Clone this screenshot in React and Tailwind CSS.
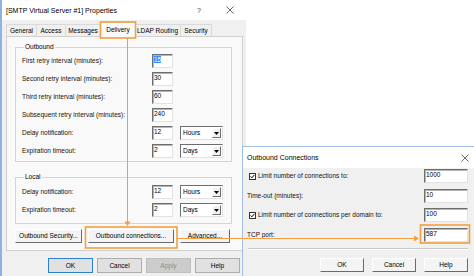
import React from 'react';

const label = 'text-[6.5px] leading-[8px] text-[#111] whitespace-nowrap';

function CloseIcon() {
  return (
    <svg width="8" height="8" viewBox="0 0 8 8" className="shrink-0">
      <path d="M0.5 0.5L7.5 7.5M7.5 0.5L0.5 7.5" stroke="#444" strokeWidth="0.8" />
    </svg>
  );
}

function TextBox({ value, selected, wide }) {
  return (
    <div
      className={
        (wide ? 'w-[44px] ' : 'w-[21px] ') +
        'h-[14px] shrink-0 border border-t-[#6e6e6e] border-l-[#6e6e6e] border-r-[#e2e2e2] border-b-[#e2e2e2] bg-white pl-[1px] pt-[1px] text-[6.5px] leading-[8px] text-black shadow-[inset_1px_1px_0_#b4b4b4]'
      }
    >
      {selected ? <span className="bg-[#3390ff] text-white">{value}</span> : value}
    </div>
  );
}

function Combo({ value }) {
  return (
    <div className="ml-[7px] flex h-[14px] w-[43px] shrink-0 items-center border border-t-[#6e6e6e] border-l-[#6e6e6e] border-r-[#e2e2e2] border-b-[#e2e2e2] bg-white pl-[2px]">
      <span className="flex-1 text-[6.5px] leading-[8px] text-black">{value}</span>
      <div className="mr-[1px] flex h-[10px] w-[9px] items-center justify-center border border-t-white border-l-white border-r-[#6e6e6e] border-b-[#6e6e6e] bg-[#f0f0f0]">
        <svg width="5" height="3" viewBox="0 0 5 3">
          <path d="M0 0H5L2.5 3Z" fill="#000" />
        </svg>
      </div>
    </div>
  );
}

function Row({ text, value, selected, combo }) {
  return (
    <div className="flex h-[14px] items-center">
      <span className={'w-[130px] shrink-0 ' + label}>{text}</span>
      <TextBox value={value} selected={selected} />
      {combo && <Combo value={combo} />}
    </div>
  );
}

function Btn3D({ children, width }) {
  return (
    <div
      className={
        width +
        ' flex h-[14px] shrink-0 items-center justify-center border border-t-white border-l-white border-r-[#696969] border-b-[#696969] bg-[#f4f4f4] text-[6.5px] leading-[8px] text-black'
      }
    >
      {children}
    </div>
  );
}

function Tab({ text, width, active }) {
  if (active) {
    return (
      <div
        className={
          width +
          ' z-10 -mb-[1px] flex h-[15px] items-center justify-center border border-b-0 border-[#d0d0d0] bg-[#f9f9f9] text-[6.5px] leading-[8px] text-black'
        }
      >
        {text}
      </div>
    );
  }
  return (
    <div
      className={
        width +
        ' -ml-[1px] flex h-[12px] items-center justify-center border border-b-0 border-[#d9d9d9] bg-[#f0f0f0] text-[6.5px] leading-[8px] text-black first:ml-0'
      }
    >
      {text}
    </div>
  );
}

function CheckBox() {
  return (
    <div className="ml-[2px] flex h-[7px] w-[7px] shrink-0 items-center justify-center border border-[#333] bg-white">
      <svg width="5" height="5" viewBox="0 0 5 5">
        <path d="M0.6 2.4L1.9 3.8L4.4 0.9" stroke="#000" strokeWidth="1" fill="none" />
      </svg>
    </div>
  );
}

function PropertiesDialog() {
  return (
    <div className="absolute left-0 top-0 flex h-[276px] w-[246px] flex-col border-l-2 border-[#8db4de] bg-[#f0f0f0]">
      <div className="flex h-[20px] shrink-0 items-center bg-white pl-[4px]">
        <span className="text-[7px] leading-[9px] text-black">[SMTP Virtual Server #1] Properties</span>
        <span className="ml-auto text-[7px] leading-[9px] text-[#333]">?</span>
        <span className="ml-[25px] mr-[12px]">
          <CloseIcon />
        </span>
      </div>

      <div className="flex flex-col pl-[4px] pr-[3px] pt-[2px]">
        <div className="flex h-[14px] items-end">
          <Tab text="General" width="w-[31px]" />
          <Tab text="Access" width="w-[30px]" />
          <Tab text="Messages" width="w-[36px]" />
          <Tab text="Delivery" width="w-[36px] -mx-[1px]" active />
          <Tab text="LDAP Routing" width="w-[47px]" />
          <Tab text="Security" width="w-[32px]" />
        </div>

        <div className="flex h-[215px] flex-col border border-[#d0d0d0] bg-[#f9f9f9] pl-[8px] pr-[10px] pt-[6px]">
          <fieldset className="border border-[#d5d5d5] px-[6px] pb-[3px] pt-[3px]">
            <legend className="ml-[2px] px-[1px] text-[6.5px] leading-[8px] text-black">Outbound</legend>
            <div className="flex flex-col gap-[4px]">
              <Row text="First retry interval (minutes):" value="15" selected />
              <Row text="Second retry interval (minutes):" value="30" />
              <Row text="Third retry interval (minutes):" value="60" />
              <Row text="Subsequent retry interval (minutes):" value="240" />
              <Row text="Delay notification:" value="12" combo="Hours" />
              <Row text="Expiration timeout:" value="2" combo="Days" />
            </div>
          </fieldset>

          <fieldset className="mt-[11px] border border-[#d5d5d5] px-[6px] pb-[6px] pt-[4px]">
            <legend className="ml-[2px] px-[1px] text-[6.5px] leading-[8px] text-black">Local</legend>
            <div className="flex flex-col gap-[4px]">
              <Row text="Delay notification:" value="12" combo="Hours" />
              <Row text="Expiration timeout:" value="2" combo="Days" />
            </div>
          </fieldset>

          <div className="mt-[5px] flex gap-[6px]">
            <Btn3D width="w-[67px]">Outbound Security...</Btn3D>
            <Btn3D width="w-[86px]">Outbound connections...</Btn3D>
            <Btn3D width="w-[50px]">Advanced...</Btn3D>
          </div>
        </div>

        <div className="mt-[7px] flex justify-end gap-[4px] pr-[3px]">
          <div className="flex h-[15px] w-[45px] items-center justify-center border border-[#2f7fd1] bg-[#e1e1e1] text-[6.5px] leading-[8px] text-black">
            OK
          </div>
          <div className="flex h-[15px] w-[45px] items-center justify-center border border-[#adadad] bg-[#e1e1e1] text-[6.5px] leading-[8px] text-black">
            Cancel
          </div>
          <div className="flex h-[15px] w-[45px] items-center justify-center border border-[#bfbfbf] bg-[#cccccc] text-[6.5px] leading-[8px] text-[#8c8c8c]">
            Apply
          </div>
          <div className="flex h-[15px] w-[45px] items-center justify-center border border-[#adadad] bg-[#e1e1e1] text-[6.5px] leading-[8px] text-black">
            Help
          </div>
        </div>
      </div>
    </div>
  );
}

function ConnectionsDialog() {
  return (
    <div className="absolute bottom-0 left-[242px] right-0 top-[146px] flex flex-col border-l border-t border-[#9fc0e3] bg-[#f0f0f0]">
      <div className="flex h-[21px] shrink-0 items-center bg-white pl-[4px] pr-[5px]">
        <span className="text-[7px] leading-[9px] text-black">Outbound Connections</span>
        <span className="ml-auto">
          <CloseIcon />
        </span>
      </div>

      <div className="flex flex-col pl-[4px] pr-[6px] pt-[1px]">
        <div className="flex flex-col gap-[5.5px]">
          <div className="flex h-[14px] items-center">
            <CheckBox />
            <span className={'ml-[2px] flex-1 ' + label}>Limit number of connections to:</span>
            <TextBox value="1000" wide />
          </div>
          <div className="flex h-[14px] items-center">
            <span className={'flex-1 ' + label}>Time-out (minutes):</span>
            <TextBox value="10" wide />
          </div>
          <div className="flex h-[14px] items-center">
            <CheckBox />
            <span className={'ml-[2px] flex-1 ' + label}>Limit number of connections per domain to:</span>
            <TextBox value="100" wide />
          </div>
          <div className="flex h-[14px] items-center">
            <span className={'flex-1 ' + label}>TCP port:</span>
            <TextBox value="587" wide />
          </div>
        </div>

        <div className="ml-[1px] mt-[6px] border-t border-b border-t-[#c8c8c8] border-b-white" />

        <div className="mt-[8px] flex justify-end gap-[8px]">
          <Btn3D width="w-[44px]">OK</Btn3D>
          <Btn3D width="w-[44px]">Cancel</Btn3D>
          <Btn3D width="w-[44px]">Help</Btn3D>
        </div>
      </div>
    </div>
  );
}

function Callouts() {
  const c = '#f0a040';
  return (
    <svg className="pointer-events-none absolute inset-0 z-20" width="474" height="276" viewBox="0 0 474 276">
      <rect x="100.5" y="22" width="35" height="16" fill="none" stroke={c} strokeWidth="1.6" />
      <line x1="127.5" y1="38" x2="127.5" y2="223" stroke={c} strokeWidth="1" />
      <path d="M124.5 221.5H130.5L127.5 226Z" fill={c} />
      <rect x="85.5" y="227" width="91.5" height="21" fill="none" stroke={c} strokeWidth="1.6" />
      <line x1="177" y1="238.5" x2="415" y2="238.5" stroke={c} strokeWidth="1" />
      <path d="M414 235.5V241.5L419 238.5Z" fill={c} />
      <rect x="420.5" y="225" width="49" height="18" fill="none" stroke={c} strokeWidth="1.6" />
    </svg>
  );
}

export default function App() {
  return (
    <div className="relative h-[276px] w-[474px] overflow-hidden bg-white font-['Liberation_Sans',Arial,sans-serif]">
      <PropertiesDialog />
      <ConnectionsDialog />
      <Callouts />
    </div>
  );
}
